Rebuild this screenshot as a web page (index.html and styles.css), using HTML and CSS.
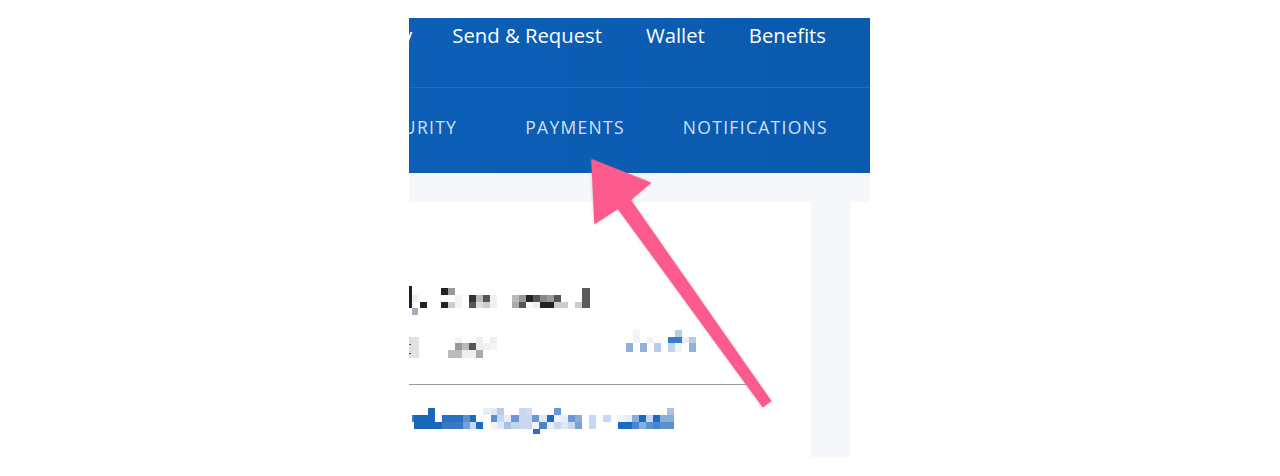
FILE: index.html
```html
<!DOCTYPE html>
<html>
<head>
<meta charset="utf-8">
<link rel="stylesheet" href="styles.css">
</head>
<body>
<div class="frame">
  <header class="header">
    <nav class="topnav">
      <span class="top-item top-activity">Activity</span>
      <span class="top-item">Send &amp; Request</span>
      <span class="top-item">Wallet</span>
      <span class="top-item">Benefits</span>
    </nav>
    <nav class="subnav">
      <span class="sub-item sub-security">SECURITY</span>
      <span class="sub-item sub-payments">PAYMENTS</span>
      <span class="sub-item">NOTIFICATIONS</span>
    </nav>
  </header>
  <main class="main">
    <div class="band"></div>
    <div class="columns">
      <section class="card">
        <svg class="mosaic row1" width="183" height="31" viewBox="27 45 549 93" shape-rendering="crispEdges">
          <rect x="28" y="48" width="7" height="67" fill="#222"/>
          <rect x="35" y="75" width="20" height="20" fill="#eee"/>
          <rect x="60" y="95" width="20" height="20" fill="#222"/>
          <rect x="35" y="115" width="20" height="20" fill="#aab"/>
          <rect x="122" y="53" width="21" height="21" fill="#222"/>
          <rect x="143" y="53" width="21" height="21" fill="#999"/>
          <rect x="122" y="95" width="21" height="20" fill="#222"/>
          <rect x="143" y="95" width="21" height="20" fill="#ccc"/>
          <rect x="164" y="75" width="21" height="40" fill="#f3f4f8"/>
          <rect x="206" y="75" width="21" height="20" fill="#333"/>
          <rect x="206" y="95" width="21" height="20" fill="#555"/>
          <rect x="227" y="75" width="21" height="20" fill="#bbb"/>
          <rect x="227" y="95" width="21" height="20" fill="#ddd"/>
          <rect x="248" y="75" width="21" height="20" fill="#555"/>
          <rect x="248" y="95" width="21" height="20" fill="#ccc"/>
          <rect x="269" y="75" width="21" height="40" fill="#f0f0f2"/>
          <rect x="336" y="75" width="21" height="20" fill="#bbb"/>
          <rect x="336" y="95" width="21" height="20" fill="#aaa"/>
          <rect x="357" y="75" width="21" height="20" fill="#999"/>
          <rect x="357" y="95" width="21" height="20" fill="#555"/>
          <rect x="378" y="75" width="21" height="20" fill="#222"/>
          <rect x="378" y="95" width="21" height="20" fill="#fafafa"/>
          <rect x="399" y="75" width="21" height="20" fill="#555"/>
          <rect x="399" y="95" width="21" height="20" fill="#eee"/>
          <rect x="420" y="75" width="21" height="20" fill="#888"/>
          <rect x="420" y="95" width="21" height="20" fill="#222"/>
          <rect x="441" y="75" width="21" height="20" fill="#999"/>
          <rect x="441" y="95" width="21" height="20" fill="#222"/>
          <rect x="462" y="75" width="21" height="20" fill="#555"/>
          <rect x="462" y="95" width="21" height="20" fill="#ccc"/>
          <rect x="483" y="95" width="21" height="20" fill="#ccc"/>
          <rect x="525" y="95" width="21" height="20" fill="#ccc"/>
          <rect x="546" y="53" width="24" height="62" fill="#5a5a5a"/>
        </svg>
        <svg class="mosaic row2" width="291" height="30" viewBox="27 180 873 90" shape-rendering="crispEdges">
          <rect x="28" y="200" width="7" height="65" fill="#ddd"/>
          <rect x="28" y="222" width="5" height="3" fill="#555"/>
          <rect x="28" y="248" width="5" height="3" fill="#555"/>
          <rect x="35" y="200" width="22" height="65" fill="#e2e2e2"/>
          <rect x="143" y="240" width="21" height="25" fill="#bbb"/>
          <rect x="164" y="200" width="21" height="20" fill="#f4f4f4"/>
          <rect x="164" y="220" width="21" height="20" fill="#999"/>
          <rect x="164" y="240" width="21" height="25" fill="#bbb"/>
          <rect x="185" y="220" width="21" height="20" fill="#bbb"/>
          <rect x="185" y="240" width="21" height="25" fill="#eee"/>
          <rect x="206" y="220" width="21" height="20" fill="#555"/>
          <rect x="206" y="240" width="21" height="25" fill="#eee"/>
          <rect x="227" y="200" width="21" height="40" fill="#eee"/>
          <rect x="227" y="240" width="21" height="25" fill="#aaa"/>
          <rect x="248" y="220" width="21" height="20" fill="#f0f0f0"/>
          <rect x="269" y="200" width="21" height="20" fill="#eee"/>
          <rect x="269" y="220" width="21" height="20" fill="#f4f4f4"/>
          <rect x="677" y="220" width="21" height="25" fill="#8fb0dc"/>
          <rect x="698" y="180" width="21" height="40" fill="#f0f4fa"/>
          <rect x="720" y="220" width="21" height="25" fill="#8fb0dc"/>
          <rect x="740" y="200" width="21" height="20" fill="#f0f4fa"/>
          <rect x="762" y="220" width="21" height="25" fill="#b8cce8"/>
          <rect x="826" y="180" width="21" height="20" fill="#b8cce8"/>
          <rect x="805" y="200" width="42" height="20" fill="#3a7cc8"/>
          <rect x="805" y="220" width="21" height="25" fill="#c0d4ee"/>
          <rect x="826" y="220" width="21" height="25" fill="#f0f4fa"/>
          <rect x="847" y="200" width="21" height="20" fill="#e8eef8"/>
          <rect x="868" y="200" width="21" height="20" fill="#b8cce8"/>
          <rect x="868" y="220" width="21" height="25" fill="#8fb0dc"/>
        </svg>
        <hr class="divider">
        <svg class="mosaic row3" width="270" height="29" viewBox="27 50 810 88" shape-rendering="crispEdges">
          <rect x="30" y="77" width="7" height="21" fill="#3a7cc8"/>
          <rect x="37" y="77" width="43" height="43" fill="#1a66b8"/>
          <rect x="80" y="55" width="20" height="65" fill="#1a66b8"/>
          <rect x="100" y="98" width="22" height="22" fill="#1a66b8"/>
          <rect x="122" y="77" width="63" height="21" fill="#2a70c0"/>
          <rect x="122" y="98" width="63" height="22" fill="#3a78c4"/>
          <rect x="185" y="77" width="21" height="21" fill="#5a8fd0"/>
          <rect x="185" y="98" width="21" height="22" fill="#7ba0d8"/>
          <rect x="206" y="77" width="21" height="21" fill="#1a6cc0"/>
          <rect x="206" y="98" width="21" height="22" fill="#c8d8f0"/>
          <rect x="227" y="98" width="21" height="22" fill="#1a6cc0"/>
          <rect x="248" y="55" width="22" height="22" fill="#e8eef8"/>
          <rect x="270" y="55" width="20" height="22" fill="#e0e8f4"/>
          <rect x="270" y="77" width="20" height="21" fill="#5a8fd0"/>
          <rect x="270" y="98" width="20" height="22" fill="#f0f4fa"/>
          <rect x="290" y="55" width="22" height="22" fill="#b8cce8"/>
          <rect x="290" y="77" width="22" height="21" fill="#c8d8f0"/>
          <rect x="290" y="98" width="22" height="22" fill="#e0e8f4"/>
          <rect x="312" y="77" width="21" height="21" fill="#e8eef8"/>
          <rect x="312" y="98" width="21" height="22" fill="#a8c0e4"/>
          <rect x="333" y="77" width="22" height="21" fill="#6a98d4"/>
          <rect x="333" y="98" width="22" height="22" fill="#c0d4ee"/>
          <rect x="355" y="55" width="21" height="65" fill="#c8d8f0"/>
          <rect x="376" y="55" width="21" height="22" fill="#d0dcf0"/>
          <rect x="376" y="77" width="21" height="43" fill="#c8d8f0"/>
          <rect x="397" y="77" width="21" height="21" fill="#6a98d4"/>
          <rect x="397" y="98" width="21" height="22" fill="#f0f4fa"/>
          <rect x="400" y="120" width="20" height="15" fill="#2a70c0"/>
          <rect x="418" y="77" width="22" height="21" fill="#e0e8f4"/>
          <rect x="418" y="98" width="22" height="22" fill="#4a84cc"/>
          <rect x="440" y="77" width="22" height="21" fill="#1a6cc0"/>
          <rect x="440" y="98" width="22" height="22" fill="#e8eef8"/>
          <rect x="462" y="55" width="21" height="22" fill="#6a98d4"/>
          <rect x="462" y="77" width="21" height="21" fill="#f0f4fa"/>
          <rect x="462" y="98" width="21" height="22" fill="#c8d8f0"/>
          <rect x="483" y="77" width="21" height="21" fill="#e8eef8"/>
          <rect x="483" y="98" width="21" height="22" fill="#e0e8f4"/>
          <rect x="504" y="77" width="21" height="21" fill="#6a98d4"/>
          <rect x="504" y="98" width="21" height="22" fill="#c8d8f0"/>
          <rect x="525" y="77" width="21" height="21" fill="#8aaedc"/>
          <rect x="525" y="98" width="21" height="22" fill="#7ba0d8"/>
          <rect x="570" y="77" width="20" height="43" fill="#c8d8f0"/>
          <rect x="612" y="77" width="22" height="21" fill="#c8d8f0"/>
          <rect x="656" y="77" width="22" height="21" fill="#f0f4fa"/>
          <rect x="656" y="98" width="22" height="22" fill="#1a6cc0"/>
          <rect x="678" y="77" width="20" height="21" fill="#e8eef8"/>
          <rect x="678" y="98" width="20" height="22" fill="#1a6cc0"/>
          <rect x="698" y="77" width="22" height="21" fill="#8aaedc"/>
          <rect x="698" y="98" width="22" height="22" fill="#4a84cc"/>
          <rect x="720" y="77" width="20" height="21" fill="#1a6cc0"/>
          <rect x="720" y="98" width="20" height="22" fill="#8aaedc"/>
          <rect x="740" y="77" width="22" height="21" fill="#c8d8f0"/>
          <rect x="740" y="98" width="22" height="22" fill="#5a8fd0"/>
          <rect x="762" y="77" width="22" height="21" fill="#1a6cc0"/>
          <rect x="762" y="98" width="22" height="22" fill="#4a84cc"/>
          <rect x="784" y="77" width="21" height="21" fill="#8aaedc"/>
          <rect x="784" y="98" width="21" height="22" fill="#5a8fd0"/>
          <rect x="805" y="55" width="21" height="22" fill="#a8c0e4"/>
          <rect x="805" y="77" width="21" height="21" fill="#8aaedc"/>
          <rect x="805" y="98" width="21" height="22" fill="#5a8fd0"/>
        </svg>
      </section>
      <aside class="rail"></aside>
    </div>
  </main>
</div>
<svg class="arrow" width="1280" height="476" viewBox="0 0 1280 476">
  <polygon points="592,160 650,183 630,200 770.5,401 763,406.5 618,208 595,223" fill="#fd5b8e" stroke="#fd5b8e" stroke-width="1.5" stroke-linejoin="round"/>
</svg>
</body>
</html>
```
FILE: styles.css
```css
html, body {
  margin: 0;
  padding: 0;
  background: #ffffff;
}
body {
  width: 1280px;
  height: 476px;
  overflow: hidden;
  position: relative;
  font-family: "Open Sans", "Liberation Sans", sans-serif;
}
.frame {
  margin: 18px 0 0 409px;
  width: 461px;
  overflow: hidden;
}
.header {
  background: linear-gradient(90deg, #0c5fb6 0%, #0a5aae 100%);
  height: 155px;
  display: flex;
  flex-direction: column;
}
.topnav {
  height: 70px;
  border-bottom: 1px solid #1a72c6;
  display: flex;
  justify-content: flex-end;
  align-items: flex-start;
  padding: 3px 44px 0 0;
  gap: 44px;
  overflow: hidden;
  white-space: nowrap;
  box-sizing: border-box;
}
.top-item {
  color: #ffffff;
  font-size: 20.3px;
  font-weight: 500;
  flex: none;
}
.top-activity {
  margin-right: -4px;
}
.subnav {
  flex: 1;
  display: flex;
  justify-content: flex-end;
  align-items: center;
  padding-right: 42px;
  gap: 58px;
  overflow: hidden;
  white-space: nowrap;
  padding-bottom: 7px;
}
.sub-item {
  color: rgba(235, 241, 250, 0.9);
  font-size: 17.5px;
  letter-spacing: 1.3px;
  flex: none;
}
.sub-security {
  margin-right: 10px;
}
.main {
  height: 284px;
  display: flex;
  flex-direction: column;
}
.band {
  height: 29px;
  background: #f5f7fa;
  flex: none;
}
.columns {
  flex: 1;
  display: flex;
}
.card {
  width: 402px;
  background: #ffffff;
  display: flex;
  flex-direction: column;
  align-items: flex-start;
}
.rail {
  width: 39px;
  background: #f5f7fa;
}
.mosaic {
  display: block;
  flex: none;
}
.row1 {
  margin-top: 83px;
}
.row2 {
  margin-top: 14px;
}
.divider {
  margin: 24px 0 0 0;
  width: 339px;
  height: 0;
  border: none;
  border-top: 1px solid #9a9a9a;
}
.row3 {
  margin-top: 21px;
}
.arrow {
  position: absolute;
  left: 0;
  top: 0;
  pointer-events: none;
  filter: drop-shadow(0 0 1.5px rgba(120, 120, 120, 0.45));
}
```
